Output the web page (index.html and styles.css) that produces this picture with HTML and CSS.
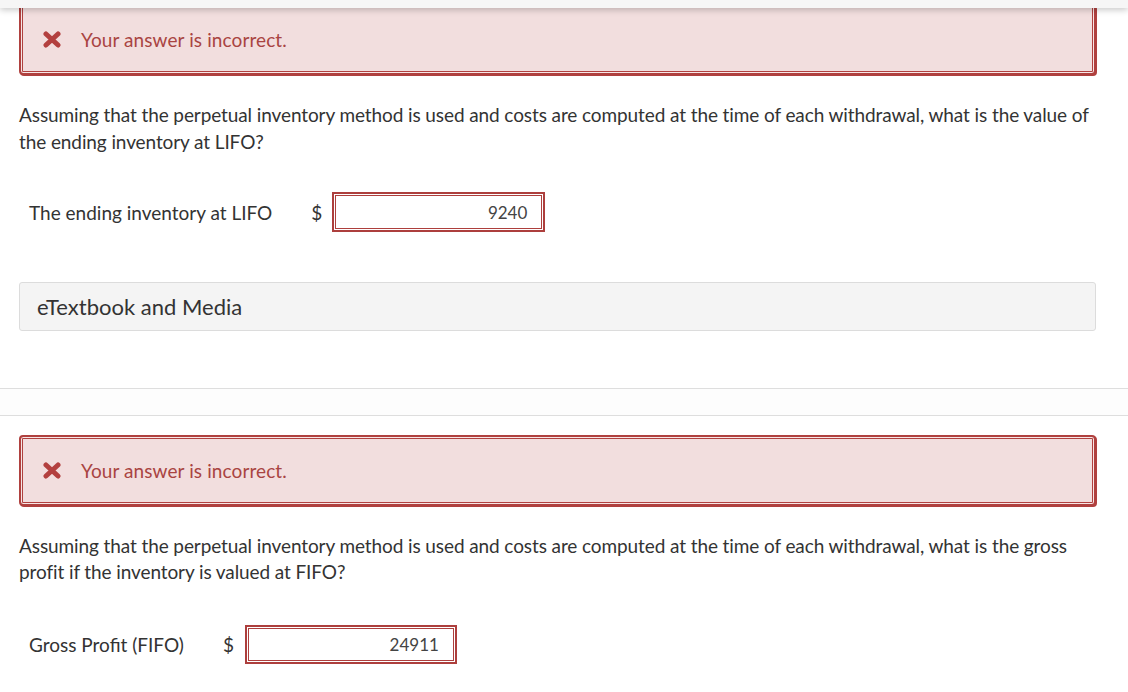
FILE: index.html
```html
<!DOCTYPE html>
<html lang="en">
<head>
<meta charset="utf-8">
<title>Quiz feedback</title>
<link rel="stylesheet" href="styles.css">
</head>
<body>
<div class="topbar"></div>
<div class="page">
  <section class="question">
    <div class="alert">
      <svg class="alert-icon" viewBox="0 0 18 17" width="18" height="17" aria-hidden="true">
        <path d="M3 3 L15 14 M15 3 L3 14" stroke="#b3403f" stroke-width="5" stroke-linecap="round" fill="none"/>
      </svg>
      <span class="alert-text">Your answer is incorrect.</span>
    </div>
    <p class="prompt">Assuming that the perpetual inventory method is used and costs are computed at the time of each withdrawal, what is the value of the ending inventory at LIFO?</p>
    <div class="answer-row">
      <span class="answer-label">The ending inventory at LIFO</span>
      <span class="currency">$</span>
      <div class="answer-input">9240</div>
    </div>
    <div class="media">eTextbook and Media</div>
  </section>
  <div class="divider"></div>
  <section class="question second">
    <div class="alert">
      <svg class="alert-icon" viewBox="0 0 18 17" width="18" height="17" aria-hidden="true">
        <path d="M3 3 L15 14 M15 3 L3 14" stroke="#b3403f" stroke-width="5" stroke-linecap="round" fill="none"/>
      </svg>
      <span class="alert-text">Your answer is incorrect.</span>
    </div>
    <p class="prompt">Assuming that the perpetual inventory method is used and costs are computed at the time of each withdrawal, what is the gross profit if the inventory is valued at FIFO?</p>
    <div class="answer-row">
      <span class="answer-label">Gross Profit (FIFO)</span>
      <span class="currency">$</span>
      <div class="answer-input narrow">24911</div>
    </div>
  </section>
</div>
</body>
</html>
```
FILE: styles.css
```css
* { box-sizing: border-box; }
html, body { margin: 0; padding: 0; background: #fff; }
body {
  font-family: Lato, "Open Sans", "Liberation Sans", sans-serif;
  color: #333;
  overflow: hidden;
}
.topbar {
  position: absolute;
  top: 0; left: 0; right: 0;
  height: 8px;
  background: #f6f6f6;
  box-shadow: 0 2px 6px rgba(0,0,0,0.22);
  z-index: 5;
}
.page { padding-top: 4px; }
.question { padding: 0 32px 0 19px; }
.alert {
  height: 71px;
  display: flex;
  align-items: center;
  padding-left: 22px;
  background: #f2dede;
  border: 2px solid #b0413f;
  border-radius: 4px;
  box-shadow: inset 0 0 0 1px #f7e6e6, inset 0 0 0 2px #b0413f, 1px 1px 0 #b0413f;
}
.alert-icon { width: 18px; height: 17px; flex: none; margin-top: -1px; }
.alert-text {
  margin-left: 20px;
  font-size: 19px;
  letter-spacing: 0.1px;
  color: #a94442;
}
.prompt {
  margin: 26px 0 0;
  font-size: 19px;
  letter-spacing: -0.1px;
  line-height: 27px;
  color: #333;
}
.answer-row {
  display: flex;
  align-items: center;
  margin-top: 37px;
  padding-left: 10px;
  font-size: 19px;
}
.answer-label { margin-right: 39px; color: #333; flex: none; }
.currency { color: #333; margin-right: 10px; flex: none; }
.answer-input {
  flex: none;
  width: 213px;
  height: 40px;
  display: flex;
  align-items: center;
  justify-content: flex-end;
  padding-right: 16px;
  font-size: 17px;
  color: #444;
  background: #fff;
  border: 2px solid #ad3f3d;
  box-shadow: inset 0 0 0 1px #fff, inset 0 0 0 2px #ad3f3d;
}
.answer-input.narrow { width: 212px; height: 39px; margin-left: 1px; }
.media {
  margin-top: 50px;
  height: 49px;
  display: flex;
  align-items: center;
  padding-left: 17px;
  font-size: 22px;
  color: #333;
  background: #f4f4f4;
  border: 1px solid #dcdcdc;
  border-radius: 3px;
}
.divider {
  margin-top: 57px;
  height: 28px;
  background: #fdfdfd;
  border-top: 1px solid #dedede;
  border-bottom: 1px solid #dedede;
}
.second { padding-top: 19px; }
.second .prompt { line-height: 26px; margin-top: 27px; }
.second .answer-row { margin-top: 40px; }
```
